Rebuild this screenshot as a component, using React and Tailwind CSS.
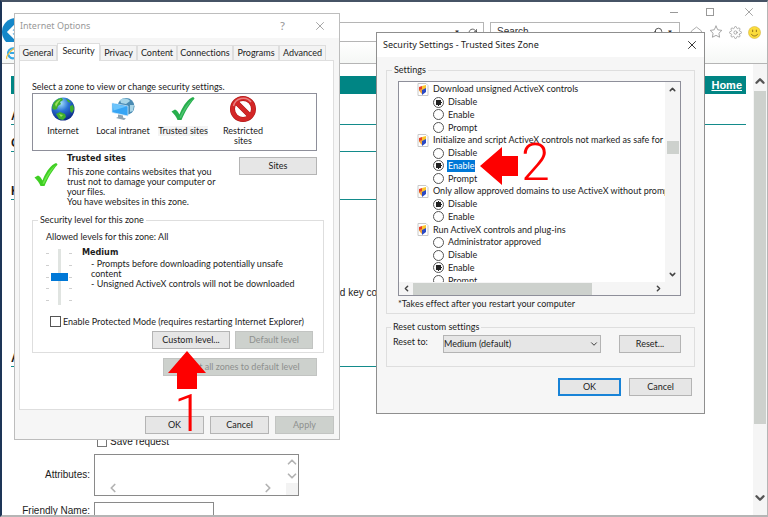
import { useState } from "react";
import { FiChevronDown, FiChevronLeft, FiChevronRight, FiChevronUp, FiHome, FiRotateCw, FiSearch, FiSettings, FiStar, FiX } from "react-icons/fi";

const tabs = [
    { name: "General", width: "w-[38px]" },
    { name: "Security", width: "w-[43px]" },
    { name: "Privacy", width: "w-[37px]" },
    { name: "Content", width: "w-10" },
    { name: "Connections", width: "w-14" },
    { name: "Programs", width: "w-[46px]" },
    { name: "Advanced", width: "w-[47px]" },
];

const zones = [
    { name: "Internet", icon: GlobeIcon },
    { name: "Local intranet", icon: IntranetIcon },
    { name: "Trusted sites", icon: CheckIcon },
    { name: "Restricted sites", icon: BlockedIcon },
];

const settings = [
    { id: "download", title: "Download unsigned ActiveX controls", options: ["Disable", "Enable", "Prompt"], value: "Disable" },
    { id: "initialize", title: "Initialize and script ActiveX controls not marked as safe for scripting", options: ["Disable", "Enable", "Prompt"], value: "Enable", highlighted: true },
    { id: "domains", title: "Only allow approved domains to use ActiveX without prompt", options: ["Disable", "Enable"], value: "Disable" },
    { id: "run", title: "Run ActiveX controls and plug-ins", options: ["Administrator approved", "Disable", "Enable", "Prompt"], value: "Enable" },
];

function GlobeIcon() {
    return (
        <svg viewBox="0 0 24 24" className="h-6 w-6">
            <defs>
                <radialGradient id="sea" cx="40%" cy="25%" r="75%">
                    <stop offset="0" stopColor="#a5e2fb" />
                    <stop offset="0.45" stopColor="#2b74d6" />
                    <stop offset="1" stopColor="#0b2a86" />
                </radialGradient>
            </defs>
            <circle cx="12" cy="12" r="11.5" fill="url(#sea)" />
            <path d="M2 7C4 3 8 1 11 1l1 2-3 2 1 2-3 2-1 3-3 1-2-2zM5 17l4-2 5 2 1 3-3 3-4-1zM19 9l3-1 1 4-2 4-2-2zM15 2l3 1 2 3-3-1z" fill="#3fae2e" />
            <path d="M4 7c2-3 4-4 6-5l-3 4-2 4zM8 17l4 1-2 2z" fill="#9be35c" />
        </svg>
    );
}

function IntranetIcon() {
    return (
        <svg viewBox="0 0 24 24" className="h-6 w-6">
            <circle cx="15" cy="9.500" r="8.500" fill="#4a8bb3" />
            <path d="M9 3c4-3 9-1 10 1l-4 3-5-1zM19 8l4 0-1 6-3 1z" fill="#a9d6e8" />
            <path d="M1 6l16 3v10L1 15.500z" fill="#36a5f5" stroke="#d9edf9" strokeWidth="0.700" />
            <path d="M1.500 6.500l14 3-13 4z" fill="#6cc4fb" />
            <path d="M7 17.500l5 1v2l3 1-2 1.500-8-2 2-1z" fill="#8ea4b3" />
        </svg>
    );
}

function CheckIcon({ bright }) {
    return (
        <svg viewBox="0 0 24 24" className="h-6 w-6">
            <path
                d="M0.500 14.500l3.500-2c2 .5 3 2.500 4.500 5C11 11 15 4 20.500 .8c1.500-.8 2.500-.5 3 1C18.500 7 14 15 10.500 23H6.500C5.500 20 3 17 .5 14.500z"
                fill={bright ? "#3fce23" : "#27ae4c"}
            />
            <path d="M8.500 20.500C12 13 16 6 22 2c-5 6-9 12-12 19z" fill={bright ? "#6be84a" : "#4cc471"} />
        </svg>
    );
}

function BlockedIcon() {
    return (
        <svg viewBox="0 0 26 26" className="h-[26px] w-[26px]">
            <circle cx="13" cy="13" r="10.500" fill="#fff" stroke="#a81515" strokeWidth="5" />
            <path d="M6 6l14 14" stroke="#a81515" strokeWidth="5" />
            <circle cx="13" cy="13" r="10.500" fill="none" stroke="#d32626" strokeWidth="4" />
            <path d="M6 6l14 14" stroke="#d32626" strokeWidth="4" />
            <path d="M3.500 10A10 10 0 0 1 21 6" fill="none" stroke="#e88080" strokeWidth="1.500" />
        </svg>
    );
}

function ActiveXIcon() {
    return (
        <svg viewBox="0 0 12 13" className="h-[13px] w-3 shrink-0">
            <path d="M1 .5h8l2 2v10H1z" fill="#fff" stroke="#c9c9c9" />
            <path d="M2 4l3-1v4L2 8z" fill="#e8402a" />
            <path d="M5 3l4-1v4L5 8z" fill="#fbc52d" />
            <path d="M5 7l4-2v4l-4 3z" fill="#2a49c4" />
            <path d="M2 7l3-1v5L3 9z" fill="#f0a23a" />
        </svg>
    );
}

function Button({ children, className = "", disabled = false, primary = false }) {
    const look = disabled
        ? "border border-[#c2c4c2] bg-[#cdd1cd] text-[#8d908d]"
        : primary
            ? "border-2 border-[#1883d7] bg-[#e6e6e6]"
            : "border border-[#b4b4b4] bg-[#e6e6e6]";
    return (
        <button disabled={disabled} className={`flex h-[18px] items-center justify-center whitespace-nowrap ${look} ${className}`}>
            {children}
        </button>
    );
}

function SectionHeading({ children, className = "" }) {
    return (
        <h2 className={`flex items-end border-b border-[#138b8b] pb-0.5 text-xs leading-3 font-bold ${className}`}>{children}</h2>
    );
}

function BrowserWindow() {
    return (
        <div className="flex h-screen flex-col overflow-hidden border-t-2 border-r border-b-2 border-l-2 border-t-[#465365] border-r-[#b5b5b5] border-b-[#b5b5b5] border-l-[#1d3557] bg-white font-['Liberation_Sans',sans-serif] text-[10px] leading-3 text-[#333]">

            {/* CAPTION */}
            <div className="flex h-5 shrink-0 items-center justify-end gap-7 pr-[11px] text-[#999]">
                <button aria-label="Minimize" className="h-px w-2 bg-[#999]" />
                <button aria-label="Maximize" className="h-2 w-2 border border-[#999]" />
                <button aria-label="Close"><FiX size={14} strokeWidth={1.5} /></button>
            </div>

            {/* ADDRESS BAR */}
            <div className="flex h-5 shrink-0 gap-1.5 pr-1.5">
                <button aria-label="Back" className="-mt-1 h-7 w-7 shrink-0 rounded-full bg-[#1487c9] text-white">
                    <svg viewBox="0 0 28 28" className="h-7 w-7">
                        <path d="M14 7l-7 7 7 7M7 14h14" fill="none" stroke="currentColor" strokeWidth="3" />
                    </svg>
                </button>
                <div className="flex flex-1 items-center justify-end gap-2 border border-[#b5b5b5] pr-1.5">
                    <span className="text-[6px]">▼</span>
                    <FiRotateCw size={9} />
                </div>
                <div className="flex w-[190px] items-center justify-between border border-[#b5b5b5] px-1.5">
                    <span>Search</span>
                    <span className="flex items-center gap-1">
                        <FiSearch size={10} className="-scale-x-100" />
                        <span className="text-[6px]">▼</span>
                    </span>
                </div>
                <div className="flex items-center gap-1.5 pl-1 text-[#999]">
                    <FiHome size={13} strokeWidth={1.5} />
                    <FiStar size={14} strokeWidth={1.5} />
                    <FiSettings size={13} strokeWidth={1.5} />
                    <svg viewBox="0 0 14 14" className="h-[13px] w-[13px]">
                        <circle cx="7" cy="7" r="6.500" fill="#fbdc3c" stroke="#c9a52e" strokeWidth="0.500" />
                        <path d="M5 4v2.500M9 4v2.500M3.500 8.500c1.500 3 5.500 3 7 0" fill="none" stroke="#8a6a1c" />
                    </svg>
                </div>
            </div>

            {/* FAVORITES BAR */}
            <div className="flex h-[22px] shrink-0 items-center border-b border-[#b5b5b5] bg-linear-to-b from-white to-[#f5f7f5] pl-1">
                <svg viewBox="0 0 14 14" className="h-3.5 w-3.5">
                    <path d="M11.500 9.500A5 5 0 1 1 12 7H4" fill="none" stroke="#35a8e6" strokeWidth="2.200" />
                    <path d="M1 13C-1 10 8 0 13 1.500" fill="none" stroke="#f1bf35" strokeWidth="1.200" />
                </svg>
            </div>

            <div className="flex min-h-0 flex-1">
                {/* PAGE */}
                <main className="min-w-0 flex-1 overflow-hidden pt-3 pr-[7px] pl-[9px] text-[#1c1c1c]">
                    <div className="flex h-[18px] items-center justify-end bg-[#008584] pr-1">
                        <a href="#home" className="text-[11px] font-bold text-white underline">Home</a>
                    </div>
                    <SectionHeading className="h-[31px]">Advanced Certificate Request</SectionHeading>
                    <SectionHeading className="mr-14 h-[27px]">Certificate Template:</SectionHeading>
                    <SectionHeading className="mr-14 h-12">Key Options:</SectionHeading>
                    <p className="mt-[87px] pl-[271px]">User specified key container name</p>
                    <SectionHeading className="mr-14 h-[68px]">Additional Options:</SectionHeading>
                    <div className="mt-[69px] grid grid-cols-[79px_1fr] items-center gap-x-1 gap-y-1.5">
                        <label className="col-start-2 flex items-center gap-[3px] pl-[3px]">
                            <input type="checkbox" className="h-2.5 w-2.5 appearance-none border border-[#777] bg-white" />
                            Save request
                        </label>
                        <label htmlFor="attributes" className="text-right">Attributes:</label>
                        <div className="relative h-[42px] w-[205px]">
                            <textarea id="attributes" className="block h-full w-full resize-none border border-[#8a8a8a] pr-3.5 pb-3" />
                            <div className="absolute right-px bottom-px flex h-10 w-3 flex-col items-center text-[#b3b3b3]">
                                <FiChevronUp size={14} strokeWidth={3} />
                                <FiChevronDown size={14} strokeWidth={3} />
                                <span className="w-full flex-1 bg-[#f3f3f3]" />
                            </div>
                            <div className="absolute right-6 bottom-px left-3 flex justify-between text-[#b3b3b3]">
                                <FiChevronLeft size={14} strokeWidth={3} />
                                <FiChevronRight size={14} strokeWidth={3} />
                            </div>
                        </div>
                        <label htmlFor="friendly" className="flex justify-end whitespace-nowrap">Friendly Name:</label>
                        <input id="friendly" className="h-[18px] w-[120px] border border-[#8a8a8a]" />
                    </div>
                </main>

                {/* PAGE SCROLLBAR */}
                <div className="flex w-3.5 shrink-0 flex-col items-center bg-[#f5f5f5] pt-2.5 pb-2.5 text-[#555]">
                    <FiChevronUp size={14} strokeWidth={4} />
                    <span className="mt-[3px] w-3 flex-1 bg-[#cdd1cd]" />
                    <FiChevronDown size={14} strokeWidth={4} className="mt-[67px]" />
                </div>
            </div>
        </div>
    );
}

function InternetOptions() {
    const [tab, setTab] = useState("Security");
    const [level, setLevel] = useState(2);

    return (
        <section className="absolute top-[13px] left-3.5 w-[326px] border border-[#bdbdbd] bg-[#f6f6f6]">

            {/* TITLE */}
            <header className="flex h-6 items-center bg-white pr-3 pl-[5px] text-[#999]">
                <h1 className="flex-1 font-['Noto_Sans',sans-serif] text-[9px]">Internet Options</h1>
                <button aria-label="Help" className="mr-7 text-xs">?</button>
                <button aria-label="Close"><FiX size={14} strokeWidth={1.5} /></button>
            </header>

            <div className="pt-[5px] pr-[5px] pb-[5px] pl-1">
                {/* TABS */}
                <div role="tablist" className="flex h-[17px] items-end">
                    {tabs.map(({ name, width }) => (
                        <button
                            key={name}
                            role="tab"
                            aria-selected={tab === name}
                            onClick={() => setTab(name)}
                            className={`border border-b-0 border-[#dedede] ${width} ${tab === name ? "-mb-px h-[18px] bg-white pb-1" : "h-[15px] bg-[#f3f3f3]"}`}
                        >
                            {name}
                        </button>
                    ))}
                </div>

                <div className="border border-[#dedede] bg-white pt-[21px] pr-[9px] pb-[33px] pl-3">
                    {/* ZONES */}
                    <p>Select a zone to view or change security settings.</p>
                    <ul className="mt-px mr-[7px] flex h-[58px] border border-[#8e8f9a] pt-[3px]">
                        {zones.map(({ name, icon: Icon }) => (
                            <li key={name} className="flex w-[60px] flex-col items-center text-center">
                                <span className="flex h-6 items-center"><Icon /></span>
                                <span className={`mt-[5px] ${name === "Trusted sites" ? "bg-[#f4f4f4]" : ""} ${name === "Restricted sites" ? "w-12" : "whitespace-nowrap"}`}>{name}</span>
                            </li>
                        ))}
                    </ul>

                    <div className="mt-0.5 mr-[7px] flex">
                        <span className="mt-2.5 w-[35px] pl-0.5"><CheckIcon bright /></span>
                        <div className="flex-1">
                            <h2 className="font-['DejaVu_Sans_Condensed','DejaVu_Sans',sans-serif] text-[9px] font-bold">Trusted sites</h2>
                            <p className="mt-1 w-[150px]">This zone contains websites that you trust not to damage your computer or your files.</p>
                            <p>You have websites in this zone.</p>
                        </div>
                        <Button className="mt-1 w-[78px]">Sites</Button>
                    </div>

                    {/* SECURITY LEVEL */}
                    <fieldset className="mt-2 border border-[#dedede] pr-2.5 pb-[3px] pl-[13px]">
                        <legend className="-ml-2 px-0.5">Security level for this zone</legend>
                        <p className="mt-[7px]">Allowed levels for this zone: All</p>
                        <div className="mt-[5px] flex">
                            <div className="flex w-9 justify-between pt-0.5 pr-2.5">
                                <Ticks />
                                <input
                                    type="range"
                                    aria-label="Security level"
                                    min="0"
                                    max="4"
                                    value={level}
                                    onChange={e => setLevel(Number(e.target.value))}
                                    className="h-14 w-[17px] appearance-none bg-[linear-gradient(90deg,transparent_7px,#e0e4e1_7px,#e0e4e1_10px,transparent_10px)] [writing-mode:vertical-lr] [&::-webkit-slider-thumb]:h-2 [&::-webkit-slider-thumb]:w-[17px] [&::-webkit-slider-thumb]:appearance-none [&::-webkit-slider-thumb]:bg-[#0078d7]"
                                />
                                <Ticks />
                            </div>
                            <div>
                                <h3 className="font-['DejaVu_Sans_Condensed','DejaVu_Sans',sans-serif] text-[9px] font-bold">Medium</h3>
                                <ul className="mt-0.5 w-[220px] pl-[9px]">
                                    <li>- Prompts before downloading potentially unsafe<br />content</li>
                                    <li>- Unsigned ActiveX controls will not be downloaded</li>
                                </ul>
                            </div>
                        </div>
                        <label className="mt-[11px] flex items-center gap-0.5 pl-1">
                            <input type="checkbox" className="h-[11px] w-[11px] appearance-none border border-[#555] bg-white" />
                            Enable Protected Mode (requires restarting Internet Explorer)
                        </label>
                        <div className="mt-1 flex justify-end gap-[5px]">
                            <Button className="w-[78px]">Custom level...</Button>
                            <Button disabled className="w-[78px]">Default level</Button>
                        </div>
                    </fieldset>
                    <Button disabled className="mt-[5px] mr-[7px] ml-auto w-[154px]">Reset all zones to default level</Button>
                </div>

                <div className="mt-1.5 flex justify-end gap-1.5">
                    <Button className="w-[59px]">OK</Button>
                    <Button className="w-[59px]">Cancel</Button>
                    <Button disabled className="w-[59px]">Apply</Button>
                </div>
            </div>
        </section>
    );
}

function Ticks() {
    return (
        <span className="flex h-[52px] flex-col justify-between pt-1">
            {[0, 1, 2, 3, 4].map(i => <span key={i} className="h-px w-[3px] bg-[#cfcfcf]" />)}
        </span>
    );
}

function SecuritySettings() {
    const [values, setValues] = useState(Object.fromEntries(settings.map(s => [s.id, s.value])));

    return (
        <section className="absolute top-8 left-[376px] w-[329px] border border-[#8f8f8f] bg-[#f6f6f6]">

            {/* TITLE */}
            <header className="flex h-6 items-center justify-between bg-white pr-[5px] pl-1.5">
                <h1 className="font-['Noto_Sans',sans-serif] text-[9px]">Security Settings - Trusted Sites Zone</h1>
                <button aria-label="Close"><FiX size={14} strokeWidth={1.5} /></button>
            </header>

            <div className="px-[9px] pt-2 pb-[17px]">
                <fieldset className="border border-[#dedede] pr-[13px] pb-1 pl-[11px]">
                    <legend className="-ml-1.5 px-0.5">Settings</legend>
                    <div className="mt-1.5 grid grid-cols-[1fr_15px] border border-[#8e8f9a] bg-white">
                        {/* SETTINGS LIST */}
                        <div className="h-[200px] overflow-hidden pt-px pl-[18px]">
                            <ul className="grid h-[204px] auto-rows-fr whitespace-nowrap">
                                {settings.map(s => [
                                    <li key={s.id} className="flex items-center gap-1">
                                        <ActiveXIcon />
                                        {s.title}
                                    </li>,
                                    ...s.options.map(option => (
                                        <li key={`${s.id}-${option}`} className="flex items-center pl-4">
                                            <label className="flex items-center gap-[3px]">
                                                <input
                                                    type="radio"
                                                    name={s.id}
                                                    checked={values[s.id] === option}
                                                    onChange={() => setValues({ ...values, [s.id]: option })}
                                                    className="h-[11px] w-[11px] appearance-none rounded-full border border-[#555] bg-white checked:bg-[radial-gradient(circle,#222_3px,#fff_3px)]"
                                                />
                                                <span className={s.highlighted && option === s.value ? "bg-[#0078d7] px-px py-px text-white" : "px-px"}>{option}</span>
                                            </label>
                                        </li>
                                    )),
                                ])}
                            </ul>
                        </div>
                        <div className="flex flex-col items-center bg-[#f5f5f5] py-[3px] text-[#444]">
                            <FiChevronUp size={9} strokeWidth={4} />
                            <span className="mt-[47px] h-[13px] w-3 bg-[#cdd1cd]" />
                            <FiChevronDown size={9} strokeWidth={4} className="mt-auto" />
                        </div>
                        <div className="col-span-2 flex h-[13px] items-center bg-[#f5f5f5] pr-[17px] pl-[3px] text-[#444]">
                            <FiChevronLeft size={9} strokeWidth={4} />
                            <span className="ml-0.5 h-3 w-[179px] bg-[#cdd1cd]" />
                            <FiChevronRight size={9} strokeWidth={4} className="ml-auto" />
                        </div>
                    </div>
                    <p className="mt-[3px]">*Takes effect after you restart your computer</p>
                </fieldset>

                <fieldset className="mt-2 border border-[#dedede] pr-[13px] pb-[13px] pl-1.5">
                    <legend className="-ml-0.5 px-0.5">Reset custom settings</legend>
                    <div className="mt-[3px] flex items-center">
                        <label htmlFor="reset-to" className="w-[50px] pb-1">Reset to:</label>
                        <div className="relative">
                            <select id="reset-to" className="block h-[18px] w-[158px] appearance-none border border-[#b4b4b4] bg-[#e6e6e6] pr-3">
                                <option>Medium (default)</option>
                            </select>
                            <FiChevronDown size={10} className="pointer-events-none absolute top-1 right-0.5" />
                        </div>
                        <Button className="ml-auto w-[62px]">Reset...</Button>
                    </div>
                </fieldset>

                <div className="mt-[11px] flex justify-end gap-2 pr-[3px]">
                    <Button primary className="w-[63px]">OK</Button>
                    <Button className="w-[63px]">Cancel</Button>
                </div>
            </div>
        </section>
    );
}

export default function App() {
    return (
        <div className="relative overflow-hidden">
            <BrowserWindow />

            <div className="font-[Lato,sans-serif] text-[9px] leading-[10px] text-[#1c1c1c] [font-variant-ligatures:none]">
                <InternetOptions />
                <SecuritySettings />
            </div>

            {/* STEP MARKERS */}
            <div className="font-[Roboto,sans-serif] text-[52px] leading-10 font-light text-[#fe0000]">
                <svg viewBox="0 0 38 38" className="absolute top-[351px] left-[168px] h-[38px] w-[38px]">
                    <path d="M19 0l19 22h-9v16H9V22H0z" fill="currentColor" />
                </svg>
                <span className="absolute top-[394px] left-[174px]">1</span>
                <svg viewBox="0 0 38 38" className="absolute top-[147px] left-[480px] h-[38px] w-[38px]">
                    <path d="M0 19L22 0v9h16v20H22v9z" fill="currentColor" />
                </svg>
                <span className="absolute top-[143px] left-[521px]">2</span>
            </div>
        </div>
    );
}
